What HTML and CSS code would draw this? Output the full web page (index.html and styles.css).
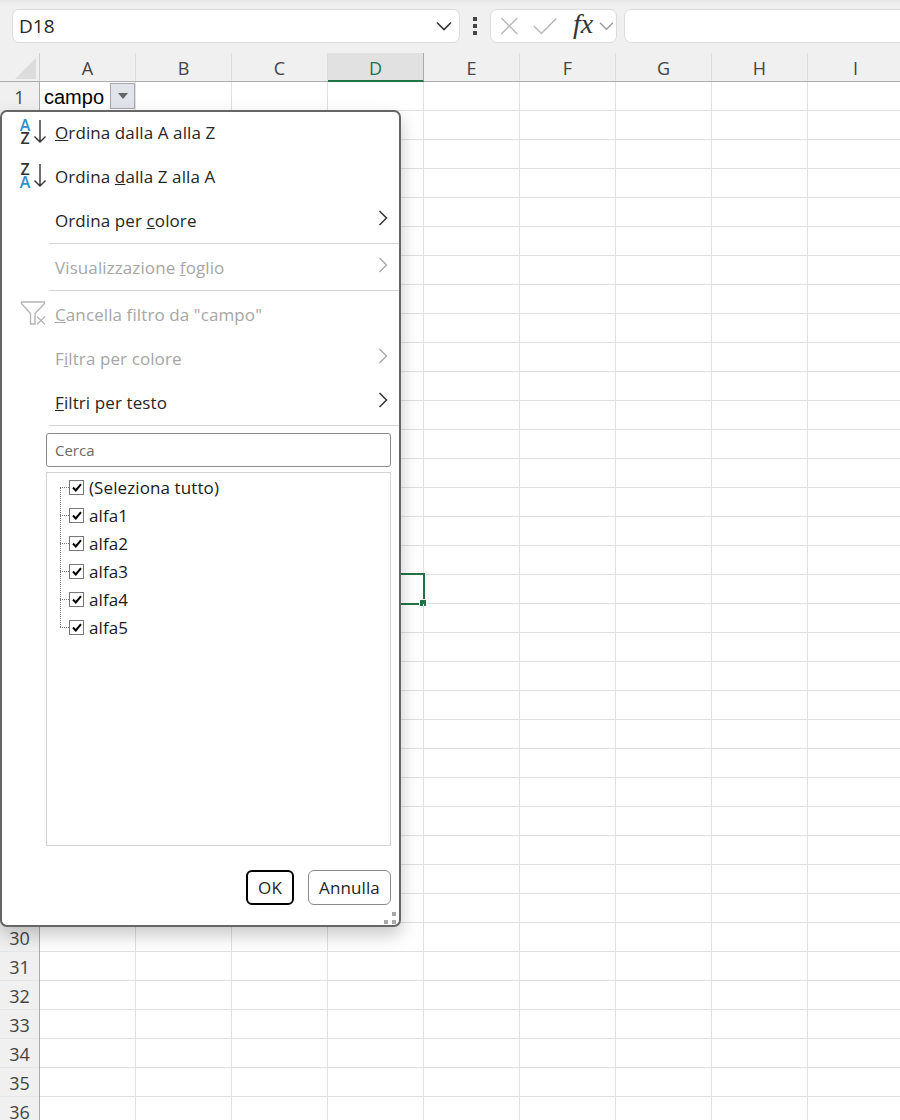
FILE: index.html
```html
<!DOCTYPE html>
<html lang="it">
<head>
<meta charset="utf-8">
<title>Filtro</title>
<link rel="stylesheet" href="styles.css">
</head>
<body>
<div class="app">
  <div class="toolbar">
    <div class="namebox"><span>D18</span>
      <svg class="chev" width="16" height="10" viewBox="0 0 16 10"><path d="M1 1.5 8 8.5 15 1.5" fill="none" stroke="#333" stroke-width="1.6"/></svg>
    </div>
    <div class="dots"><i></i><i></i><i></i></div>
    <div class="fxbox">
      <svg width="20" height="20" viewBox="0 0 20 20"><path d="M1.5 1.5 18.5 18.5M18.5 1.5 1.5 18.5" fill="none" stroke="#b8b8b8" stroke-width="1.6"/></svg>
      <svg class="tick" width="26" height="20" viewBox="0 0 26 20"><path d="M1 10 9 18 25 2" fill="none" stroke="#b8b8b8" stroke-width="1.6"/></svg>
      <span class="fx">fx</span>
      <svg width="16" height="10" viewBox="0 0 16 10"><path d="M1 1.5 8 8.5 15 1.5" fill="none" stroke="#9a9a9a" stroke-width="1.5"/></svg>
    </div>
    <div class="formula"></div>
  </div>

  <div class="colhead">
    <div class="corner"><svg width="24" height="24" viewBox="0 0 24 24"><path d="M2 23H23V2Z" fill="#dcdcdc"/></svg></div>
    <div class="col">A</div><div class="col">B</div><div class="col">C</div><div class="col active">D</div><div class="col">E</div><div class="col">F</div><div class="col">G</div><div class="col">H</div><div class="col">I</div>
  </div>

  <div class="row"><div class="num">1</div><div class="cells"><div class="a1">campo<span class="drop"><svg width="12" height="7" viewBox="0 0 12 7"><path d="M1 0H11L6 6Z" fill="#666"/></svg></span></div></div></div>
  <div class="row"><div class="num">2</div><div class="cells"></div></div>
  <div class="row"><div class="num">3</div><div class="cells"></div></div>
  <div class="row"><div class="num">4</div><div class="cells"></div></div>
  <div class="row"><div class="num">5</div><div class="cells"></div></div>
  <div class="row"><div class="num">6</div><div class="cells"></div></div>
  <div class="row"><div class="num">7</div><div class="cells"></div></div>
  <div class="row"><div class="num">8</div><div class="cells"></div></div>
  <div class="row"><div class="num">9</div><div class="cells"></div></div>
  <div class="row"><div class="num">10</div><div class="cells"></div></div>
  <div class="row"><div class="num">11</div><div class="cells"></div></div>
  <div class="row"><div class="num">12</div><div class="cells"></div></div>
  <div class="row"><div class="num">13</div><div class="cells"></div></div>
  <div class="row"><div class="num">14</div><div class="cells"></div></div>
  <div class="row"><div class="num">15</div><div class="cells"></div></div>
  <div class="row"><div class="num">16</div><div class="cells"></div></div>
  <div class="row"><div class="num">17</div><div class="cells"></div></div>
  <div class="row"><div class="num">18</div><div class="cells"><div class="selected"></div></div></div>
  <div class="row"><div class="num">19</div><div class="cells"></div></div>
  <div class="row"><div class="num">20</div><div class="cells"></div></div>
  <div class="row"><div class="num">21</div><div class="cells"></div></div>
  <div class="row"><div class="num">22</div><div class="cells"></div></div>
  <div class="row"><div class="num">23</div><div class="cells"></div></div>
  <div class="row"><div class="num">24</div><div class="cells"></div></div>
  <div class="row"><div class="num">25</div><div class="cells"></div></div>
  <div class="row"><div class="num">26</div><div class="cells"></div></div>
  <div class="row"><div class="num">27</div><div class="cells"></div></div>
  <div class="row"><div class="num">28</div><div class="cells"></div></div>
  <div class="row"><div class="num">29</div><div class="cells"></div></div>
  <div class="row"><div class="num">30</div><div class="cells"></div></div>
  <div class="row"><div class="num">31</div><div class="cells"></div></div>
  <div class="row"><div class="num">32</div><div class="cells"></div></div>
  <div class="row"><div class="num">33</div><div class="cells"></div></div>
  <div class="row"><div class="num">34</div><div class="cells"></div></div>
  <div class="row"><div class="num">35</div><div class="cells"></div></div>
  <div class="row"><div class="num">36</div><div class="cells"></div></div>
</div>

<div class="menu">
  <div class="group">
    <div class="item">
      <span class="az"><b class="blue">A</b><b>Z</b></span>
      <svg class="ico" width="30" height="30" viewBox="0 0 30 30"><path d="M21 3V25M15.5 19.5 21 25 26.5 19.5" fill="none" stroke="#333" stroke-width="1.4"/></svg>
      <span class="lbl"><u>O</u>rdina dalla A alla Z</span>
    </div>
    <div class="item">
      <span class="az"><b>Z</b><b class="blue">A</b></span>
      <svg class="ico" width="30" height="30" viewBox="0 0 30 30"><path d="M21 3V25M15.5 19.5 21 25 26.5 19.5" fill="none" stroke="#333" stroke-width="1.4"/></svg>
      <span class="lbl">Ordina <u>d</u>alla Z alla A</span>
    </div>
    <div class="item">
      <span class="lbl">Ordina per <u>c</u>olore</span>
      <svg class="arrow" width="10" height="16" viewBox="0 0 10 16"><path d="M1.5 1 8.5 8 1.5 15" fill="none" stroke="#333" stroke-width="1.5"/></svg>
    </div>
  </div>
  <div class="sep"></div>
  <div class="group">
    <div class="item off">
      <span class="lbl">Visualizzazione <u>f</u>oglio</span>
      <svg class="arrow" width="10" height="16" viewBox="0 0 10 16"><path d="M1.5 1 8.5 8 1.5 15" fill="none" stroke="#aaa" stroke-width="1.5"/></svg>
    </div>
  </div>
  <div class="sep"></div>
  <div class="group">
    <div class="item off">
      <svg class="ico" width="30" height="30" viewBox="0 0 30 30"><path d="M2.5 3H25.5V4.5L16 14.5V25H11.5V14.5L2.5 4.5Z" fill="none" stroke="#b4b4b4" stroke-width="1.4"/><path d="M18 17.5 26 25.5M26 17.5 18 25.5" fill="none" stroke="#b4b4b4" stroke-width="1.2"/></svg>
      <span class="lbl"><u>C</u>ancella filtro da "campo"</span>
    </div>
    <div class="item off">
      <span class="lbl">F<u>i</u>ltra per colore</span>
      <svg class="arrow" width="10" height="16" viewBox="0 0 10 16"><path d="M1.5 1 8.5 8 1.5 15" fill="none" stroke="#aaa" stroke-width="1.5"/></svg>
    </div>
    <div class="item">
      <span class="lbl"><u>F</u>iltri per testo</span>
      <svg class="arrow" width="10" height="16" viewBox="0 0 10 16"><path d="M1.5 1 8.5 8 1.5 15" fill="none" stroke="#333" stroke-width="1.5"/></svg>
    </div>
  </div>
  <div class="sep"></div>
  <div class="search">Cerca</div>
  <div class="tree">
    <div class="node"><span class="box"><svg width="10" height="9" viewBox="0 0 10 9"><path d="M1 4.5 3.8 7.5 9 1.2" fill="none" stroke="#000" stroke-width="2"/></svg></span>(Seleziona tutto)</div>
    <div class="node"><span class="box"><svg width="10" height="9" viewBox="0 0 10 9"><path d="M1 4.5 3.8 7.5 9 1.2" fill="none" stroke="#000" stroke-width="2"/></svg></span>alfa1</div>
    <div class="node"><span class="box"><svg width="10" height="9" viewBox="0 0 10 9"><path d="M1 4.5 3.8 7.5 9 1.2" fill="none" stroke="#000" stroke-width="2"/></svg></span>alfa2</div>
    <div class="node"><span class="box"><svg width="10" height="9" viewBox="0 0 10 9"><path d="M1 4.5 3.8 7.5 9 1.2" fill="none" stroke="#000" stroke-width="2"/></svg></span>alfa3</div>
    <div class="node"><span class="box"><svg width="10" height="9" viewBox="0 0 10 9"><path d="M1 4.5 3.8 7.5 9 1.2" fill="none" stroke="#000" stroke-width="2"/></svg></span>alfa4</div>
    <div class="node"><span class="box"><svg width="10" height="9" viewBox="0 0 10 9"><path d="M1 4.5 3.8 7.5 9 1.2" fill="none" stroke="#000" stroke-width="2"/></svg></span>alfa5</div>
  </div>
  <div class="actions">
    <div class="btn ok">OK</div>
    <div class="btn">Annulla</div>
  </div>
  <svg class="grip" width="14" height="13" viewBox="0 0 14 13"><path d="M8 0h4v4H8zM0 8h4v4H0zM8 8h4v4H8z" fill="#a8a8a8"/></svg>
</div>
</body>
</html>
```

FILE: styles.css
```css
* { box-sizing: border-box; }
html, body { margin: 0; height: 100%; overflow: hidden; background: #fff; }
body { font-family: "Open Sans", "Noto Sans", sans-serif; color: #262626; position: relative; }

.toolbar {
  height: 53px;
  background: linear-gradient(#e6e6e6 0, #f0f0f0 4px);
  display: flex;
  padding: 9px 0 0 12px;
  align-items: flex-start;
}
.namebox, .fxbox, .formula {
  height: 34px;
  background: #fff;
  border: 1px solid #dcdcdc;
  border-radius: 7px;
  display: flex;
  align-items: center;
}
.namebox { width: 448px; padding: 0 7px 0 6px; justify-content: space-between; font-size: 19px; }
.dots { width: 30px; height: 34px; display: flex; flex-direction: column; justify-content: center; align-items: center; gap: 3px; }
.dots i { width: 4px; height: 4px; background: #444; }
.fxbox { width: 127px; padding: 0 2px 0 9px; }
.tick { margin-left: 14px; }
.fx { font-family: "Liberation Serif", serif; font-style: italic; font-size: 28px; color: #333; line-height: 1; margin: -5px 0 0 16px; }
.fxbox svg:last-child { margin-left: 6px; }
.formula { flex: 1; margin-left: 7px; margin-right: -10px; }

.colhead {
  height: 29px;
  display: flex;
  background: #f0f0f0;
  border-bottom: 1px solid #ababab;
  font-size: 18px;
  color: #444;
}
.corner { width: 40px; flex: none; padding: 3px 0 0 13px; border-right: 1px solid #cfcfcf; }
.col { width: 96px; flex: none; text-align: center; border-right: 1px solid #dedede; line-height: 30px; }
.col.active { background: #e1e1e1; color: #217346; border-bottom: 2px solid #217346; height: 29px; border-right-color: #ababab; }

.row { height: 29px; display: flex; }
.num {
  width: 40px;
  flex: none;
  background: #f0f0f0;
  border-right: 1px solid #ababab;
  font-size: 18px;
  line-height: 30px;
  color: #444;
  text-align: center;
  box-shadow: inset 0 -1px 0 #e6e6e6;
}
.cells {
  flex: 1;
  position: relative;
  border-bottom: 1px solid #e0e0e0;
  background: repeating-linear-gradient(to right, transparent 0 95px, #e0e0e0 95px 96px);
}
.a1 { font-family: "Liberation Sans", sans-serif; font-size: 20px; line-height: 30px; padding-left: 4px; color: #000; display: flex; height: 28px; }
.drop {
  width: 25px; height: 26px;
  margin: 1px 0 0 6px;
  background: #e1e4ea;
  border: 1px solid #a8a8a8;
  display: flex; align-items: center; justify-content: center;
}
.selected {
  position: absolute;
  left: 287px; top: -2px;
  width: 98px; height: 32px;
  border: 2px solid #217346;
}
.selected::after {
  content: "";
  position: absolute;
  right: -3px; bottom: -3px;
  width: 6px; height: 6px;
  background: #217346;
  outline: 1px solid #fff;
}

.menu {
  position: absolute;
  left: 0; top: 110px;
  width: 401px; height: 817px;
  background: #fff;
  border: 2px solid #666;
  border-radius: 7px;
  box-shadow: 0 8px 18px rgba(0,0,0,.22);
  font-size: 17px;
  letter-spacing: .1px;
  display: flex;
  flex-direction: column;
}
.group { display: flex; flex-direction: column; gap: 4px; }
.item { height: 40px; display: flex; align-items: center; padding-left: 53px; position: relative; }
.item.off { color: #a6a6a6; }
.ico { position: absolute; left: 17px; top: 5px; }
.az {
  position: absolute; left: 17px; top: 7px;
  width: 12px;
  display: flex; flex-direction: column; align-items: center;
  font-size: 16px; line-height: 13px; letter-spacing: 0;
}
.az b { font-weight: 600; color: #333; }
.az b.blue { color: #2e8fd0; }
.arrow { position: absolute; right: 11px; top: 10px; }
.sep { height: 1px; background: #d4d4d4; margin: 3px 0 3px 47px; }

.search {
  margin: 4px 8px 0 44px;
  height: 34px;
  border: 1px solid #8a8a8a;
  border-radius: 3px;
  font-size: 15px;
  letter-spacing: 0;
  color: #6a6a6a;
  padding-left: 8px;
  line-height: 33px;
}
.tree {
  margin: 5px 8px 0 44px;
  height: 374px;
  border: 1px solid #d4d4d4;
  padding: 0 0 0 12px;
  position: relative;
}
.tree::before {
  content: "";
  position: absolute;
  left: 13px; top: 14px;
  height: 140px;
  border-left: 1px dotted #777;
}
.node { height: 28px; display: flex; align-items: center; position: relative; padding-left: 10px; color: #1a1a1a; }
.node::before {
  content: "";
  position: absolute;
  left: 1px; top: 14px;
  width: 9px;
  border-top: 1px dotted #777;
}
.box {
  width: 15px; height: 15px;
  border: 1px solid #777;
  margin-right: 5px;
  display: flex; align-items: center; justify-content: center;
  flex: none;
  background: #fff;
}
.actions { display: flex; justify-content: flex-end; gap: 14px; margin: 24px 8px 0 0; }
.btn {
  height: 35px;
  width: 83px;
  border: 1px solid #8a8a8a;
  border-radius: 6px;
  text-align: center;
  line-height: 33px;
}
.btn.ok { width: 48px; border: 2px solid #000; line-height: 31px; }
.grip { position: absolute; right: 1px; bottom: 0; }
```
